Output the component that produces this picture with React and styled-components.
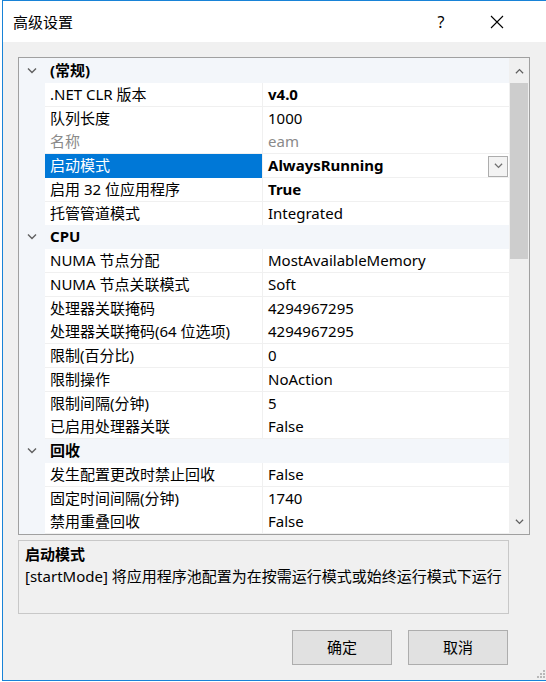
import React from "react";
import styled, { createGlobalStyle } from "styled-components";

const GlobalStyle = createGlobalStyle`
  html, body {
    margin: 0;
    padding: 0;
    background: #ffffff;
    overflow: hidden;
  }
  body {
    font-family: "Noto Sans", "Noto Sans CJK SC", sans-serif;
    color: #000;
  }
`;

const Window = styled.div`
  position: relative;
  margin-left: 2px;
  width: 548px;
  height: 681px;
  box-sizing: border-box;
  border: 1px solid #1883d7;
  background: #f0f0f0;
  display: flex;
  flex-direction: column;
`;

const TitleBar = styled.div`
  height: 41px;
  background: #ffffff;
  display: flex;
  align-items: center;
  padding-left: 10px;
  padding-right: 29px;
`;

const Title = styled.div`
  flex: 1;
  font-size: 15px;
  line-height: 20px;
  font-family: "Noto Sans CJK SC", sans-serif;
`;

const TitleButton = styled.div`
  width: 46px;
  height: 41px;
  margin-right: ${(p) => p.$gap || 0}px;
  display: flex;
  align-items: center;
  justify-content: center;
  font-size: 16px;
  color: #000;
`;

const Body = styled.div`
  padding: 15px 0 0 15px;
  display: flex;
  flex-direction: column;
`;

const Grid = styled.div`
  width: 512px;
  height: 478px;
  box-sizing: border-box;
  border: 1px solid #a0a0a0;
  background: #f3f6fa;
  display: flex;
  overflow: hidden;
`;

const List = styled.div`
  width: 490px;
  padding-top: 1px;
  display: flex;
  flex-direction: column;
`;

const Row = styled.div`
  flex: none;
  height: ${(p) => p.$h}px;
  display: grid;
  grid-template-columns: 26px 217px 1px 246px;
  font-size: 15px;
`;

const Gutter = styled.div`
  background: #f3f6fa;
  display: flex;
  align-items: center;
  justify-content: center;
`;

const CatLabel = styled.div`
  grid-column: 2 / 5;
  display: flex;
  align-items: center;
  padding: 0 0 3px 5px;
  font-weight: 700;
  background: #f3f6fa;
`;

const NameCell = styled.div`
  display: flex;
  align-items: center;
  padding: 0 0 3px 5px;
  white-space: nowrap;
  background: ${(p) => (p.$sel ? "#0078d7" : "#ffffff")};
  color: ${(p) => (p.$sel ? "#ffffff" : p.$dim ? "#8a8a8a" : "#000")};
  box-shadow: inset 0 -1px 0 ${(p) => (p.$sel ? "#0078d7" : "#f0f0f0")};
`;

const Splitter = styled.div`
  background: #f0f0f0;
`;

const ValueCell = styled.div`
  display: flex;
  align-items: center;
  padding-left: 5px;
  white-space: nowrap;
  background: #ffffff;
  font-weight: ${(p) => (p.$bold ? 700 : 400)};
  color: ${(p) => (p.$dim ? "#8a8a8a" : "#000")};
  box-shadow: inset 0 -1px 0 #f0f0f0;
`;

const ValueText = styled.span`
  flex: 1;
  padding-bottom: 3px;
`;

const DropButton = styled.div`
  width: 20px;
  height: 21px;
  margin-right: 1px;
  box-sizing: border-box;
  border: 1px solid #adadad;
  background: #f3f3f3;
  display: flex;
  align-items: center;
  justify-content: center;
`;

const ScrollBar = styled.div`
  width: 20px;
  background: #f0f0f0;
  display: flex;
  flex-direction: column;
`;

const ScrollArrow = styled.div`
  height: 25px;
  flex: none;
  display: flex;
  align-items: center;
  justify-content: center;
`;

const Track = styled.div`
  flex: 1;
  padding: 0 1px;
`;

const Thumb = styled.div`
  height: 176px;
  background: #cdcdcd;
`;

const Description = styled.div`
  margin-top: 5px;
  width: 491px;
  height: 74px;
  box-sizing: border-box;
  border: 1px solid #c8c8c8;
  padding: 2px 6px;
  font-size: 15px;
  line-height: 22px;
`;

const DescTitle = styled.div`
  font-weight: 700;
`;

const ButtonRow = styled.div`
  margin-top: 16px;
  width: 490px;
  display: flex;
  justify-content: flex-end;
  gap: 16px;
`;

const DialogButton = styled.div`
  width: 100px;
  height: 35px;
  box-sizing: border-box;
  border: 1px solid #adadad;
  background: #e1e1e1;
  display: flex;
  align-items: center;
  justify-content: center;
  padding-bottom: 2px;
  font-size: 15px;
  font-family: "Noto Sans CJK SC", sans-serif;
`;

const Grip = styled.svg`
  position: absolute;
  right: 4px;
  bottom: 2px;
`;

const Chevron = ({ up, color = "#555", w = 10 }) => (
  <svg width={w} height="6" viewBox="0 0 10 6">
    <path
      d={up ? "M1 5.5 L5 1.5 L9 5.5" : "M1 0.5 L5 4.5 L9 0.5"}
      fill="none"
      stroke={color}
      strokeWidth="1.4"
    />
  </svg>
);

const rows = [
  { cat: "(常规)" },
  { name: ".NET CLR 版本", value: "v4.0", bold: true },
  { name: "队列长度", value: "1000" },
  { name: "名称", value: "eam", dim: true },
  { name: "启动模式", value: "AlwaysRunning", bold: true, sel: true },
  { name: "启用 32 位应用程序", value: "True", bold: true },
  { name: "托管管道模式", value: "Integrated" },
  { cat: "CPU" },
  { name: "NUMA 节点分配", value: "MostAvailableMemory" },
  { name: "NUMA 节点关联模式", value: "Soft" },
  { name: "处理器关联掩码", value: "4294967295" },
  { name: "处理器关联掩码(64 位选项)", value: "4294967295" },
  { name: "限制(百分比)", value: "0" },
  { name: "限制操作", value: "NoAction" },
  { name: "限制间隔(分钟)", value: "5" },
  { name: "已启用处理器关联", value: "False" },
  { cat: "回收" },
  { name: "发生配置更改时禁止回收", value: "False" },
  { name: "固定时间间隔(分钟)", value: "1740" },
  { name: "禁用重叠回收", value: "False" },
];

const rowHeight = (i) => Math.round((i + 1) * 23.75) - Math.round(i * 23.75);

export default function App() {
  return (
    <>
      <GlobalStyle />
      <Window>
        <TitleBar>
          <Title>高级设置</Title>
          <TitleButton $gap={10}>?</TitleButton>
          <TitleButton>
            <svg width="14" height="14" viewBox="0 0 14 14">
              <path d="M1 1 L13 13 M13 1 L1 13" stroke="#000" strokeWidth="1.1" />
            </svg>
          </TitleButton>
        </TitleBar>
        <Body>
          <Grid>
            <List>
              {rows.map((r, i) =>
                r.cat ? (
                  <Row key={i} $h={rowHeight(i)}>
                    <Gutter>
                      <Chevron color="#606060" />
                    </Gutter>
                    <CatLabel>{r.cat}</CatLabel>
                  </Row>
                ) : (
                  <Row key={i} $h={rowHeight(i)}>
                    <Gutter />
                    <NameCell $sel={r.sel} $dim={r.dim}>
                      {r.name}
                    </NameCell>
                    <Splitter />
                    <ValueCell $bold={r.bold} $dim={r.dim}>
                      <ValueText>{r.value}</ValueText>
                      {r.sel && (
                        <DropButton>
                          <Chevron color="#707070" w={9} />
                        </DropButton>
                      )}
                    </ValueCell>
                  </Row>
                )
              )}
            </List>
            <ScrollBar>
              <ScrollArrow>
                <Chevron up color="#606060" w={9} />
              </ScrollArrow>
              <Track>
                <Thumb />
              </Track>
              <ScrollArrow>
                <Chevron color="#606060" w={9} />
              </ScrollArrow>
            </ScrollBar>
          </Grid>
          <Description>
            <DescTitle>启动模式</DescTitle>
            <div>[startMode] 将应用程序池配置为在按需运行模式或始终运行模式下运行</div>
          </Description>
          <ButtonRow>
            <DialogButton>确定</DialogButton>
            <DialogButton>取消</DialogButton>
          </ButtonRow>
        </Body>
        <Grip width="8" height="8" viewBox="0 0 8 8">
          <rect x="6" y="0" width="2" height="2" fill="#b8b8b8" />
          <rect x="3" y="3" width="2" height="2" fill="#b8b8b8" />
          <rect x="6" y="3" width="2" height="2" fill="#b8b8b8" />
          <rect x="0" y="6" width="2" height="2" fill="#b8b8b8" />
          <rect x="3" y="6" width="2" height="2" fill="#b8b8b8" />
          <rect x="6" y="6" width="2" height="2" fill="#b8b8b8" />
        </Grip>
      </Window>
    </>
  );
}
